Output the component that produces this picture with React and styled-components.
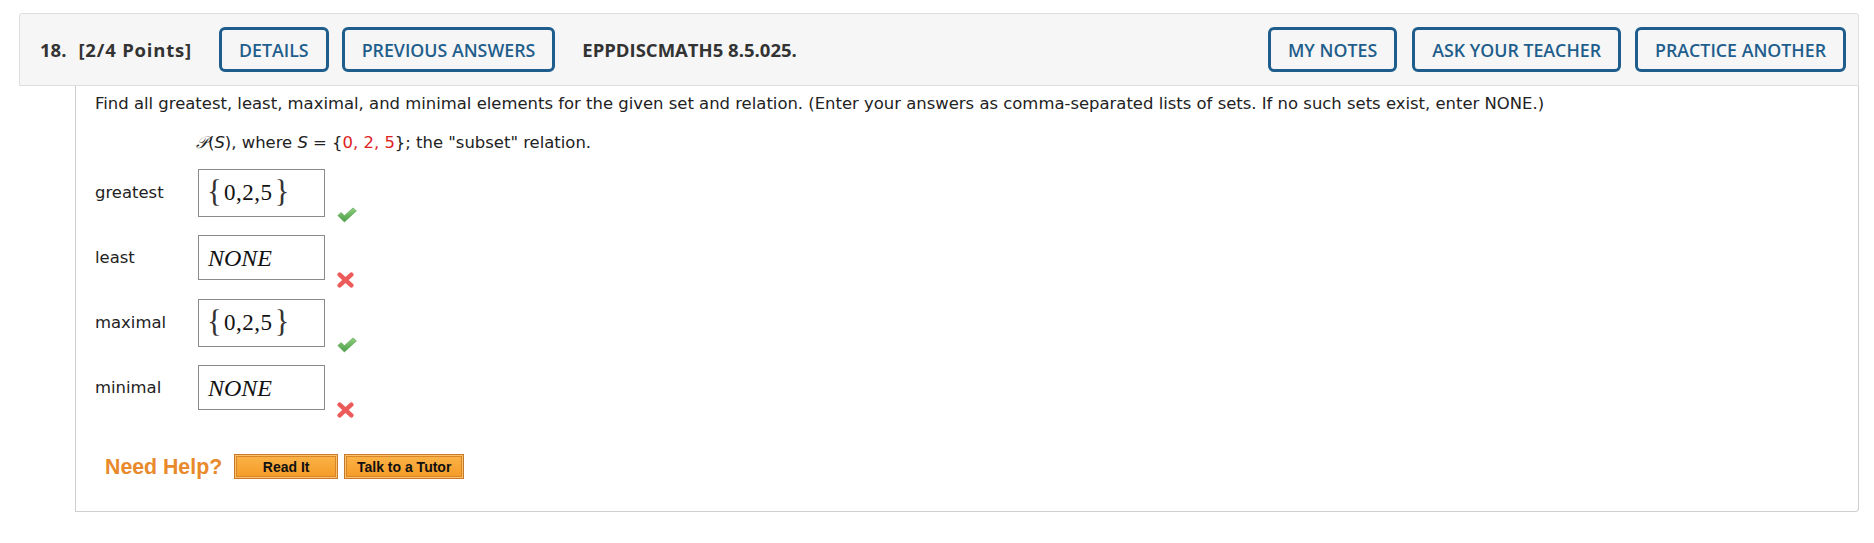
import React from "react";
import styled, { createGlobalStyle } from "styled-components";

const Global = createGlobalStyle`
  html, body { margin: 0; padding: 0; background: #fff; }
  body { font-family: "DejaVu Sans", Verdana, sans-serif; color: #222; }
`;

const Page = styled.div`
  padding: 13px 15px 0 19px;
`;

const Header = styled.div`
  display: flex;
  align-items: center;
  height: 71px;
  padding: 0 12px 0 20px;
  background: #f6f6f6;
  border: 1px solid #dedede;
  border-radius: 3px 3px 0 0;
  font-family: "Open Sans", sans-serif;
`;

const HeaderText = styled.span`
  font-weight: 700;
  font-size: 18.5px;
  color: #333;
  white-space: nowrap;
`;

const Number = styled(HeaderText)`
  margin-right: 12px;
`;

const Points = styled(HeaderText)`
  margin-right: 27px;
  letter-spacing: 0.8px;
`;

const Code = styled(HeaderText)`
  margin-left: 27px;
  flex: 1;
`;

const OutlineButton = styled.button`
  font-family: "Open Sans", sans-serif;
  font-weight: 600;
  font-size: 17.8px;
  color: #1f5e8c;
  background: transparent;
  border: 3px solid #1f5e8c;
  border-radius: 6px;
  height: 45px;
  padding: 0 17px;
  margin-left: ${(p) => p.$gap || 0}px;
  cursor: pointer;
  white-space: nowrap;
`;

const Body = styled.div`
  margin-left: 56px;
  border: 1px solid #cfcfcf;
  border-top: none;
  border-radius: 0 0 4px 0;
  padding: 8px 19px 32px 19px;
  font-size: 16.45px;
  line-height: 20px;
  color: #222;
`;

const Prompt = styled.div`
  white-space: nowrap;
`;

const Statement = styled.div`
  margin-top: 19px;
  padding-left: 96px;
`;

const Script = styled.span`
  display: inline-block;
  padding-left: 5px;
  font-family: "DejaVu Serif", "Liberation Serif", serif;
  font-style: italic;
`;

const Ital = styled.span`
  font-style: italic;
`;

const Red = styled.span`
  color: #e0221f;
`;

const Answers = styled.div`
  margin-top: 17px;
  display: flex;
  flex-direction: column;
  gap: 20px;
`;

const Row = styled.div`
  display: flex;
  align-items: center;
  height: 45px;
`;

const Label = styled.div`
  width: 103px;
`;

const AnswerBox = styled.div`
  box-sizing: border-box;
  width: 127px;
  height: ${(p) => (p.$tall ? 48 : 45)}px;
  border: 1px solid #8a8a8a;
  background: #fff;
  display: flex;
  align-items: center;
  padding-left: ${(p) => (p.$tall ? 6 : 9)}px;
  font-family: "Liberation Serif", "Times New Roman", serif;
  font-size: 23px;
  color: #111;
`;

const Brace = styled.span`
  font-size: 31px;
  font-weight: 300;
  line-height: 1;
  margin: 0 2px;
  color: #333;
  transform: translateY(-1px);
`;

const Digits = styled.span`
  letter-spacing: 0.5px;
`;

const NoneText = styled.span`
  font-style: italic;
  font-size: 24px;
`;

const Mark = styled.span`
  align-self: flex-end;
  margin-left: 12px;
  margin-bottom: -8px;
  display: inline-flex;
  line-height: 0;
`;

const HelpRow = styled.div`
  margin-top: 44px;
  padding-left: 10px;
  display: flex;
  align-items: center;
  gap: 6px;
`;

const NeedHelp = styled.span`
  font-family: "Liberation Sans", Arial, sans-serif;
  font-weight: 700;
  font-size: 21.3px;
  color: #e8892b;
  margin-right: 6px;
`;

const HelpButton = styled.button`
  box-sizing: border-box;
  width: ${(p) => p.$w}px;
  height: 25px;
  padding: 0;
  border: 1px solid #c9772a;
  background: linear-gradient(#fbb448, #f49a27);
  box-shadow: inset 0 0 0 1px #fcc46a, inset 0 0 0 2px #d98628;
  font-family: "Liberation Sans", Arial, sans-serif;
  font-weight: 700;
  font-size: 14px;
  color: #111;
  cursor: pointer;
`;

const Check = () => (
  <svg width="20" height="16" viewBox="0 0 19 15">
    <defs>
      <linearGradient id="cg" x1="0" y1="0" x2="0" y2="1">
        <stop offset="0" stopColor="#8fcf7c" />
        <stop offset="1" stopColor="#4a9d47" />
      </linearGradient>
    </defs>
    <path
      d="M0.8 8 L4 5.2 L7 8.2 L15.2 0.8 L18.4 3.6 L7 14.2 Z"
      fill="url(#cg)"
      stroke="#58a350"
      strokeWidth="0.6"
      strokeLinejoin="round"
    />
  </svg>
);

const Cross = () => (
  <svg width="17" height="16" viewBox="0 0 16 15">
    <g stroke="#ec5a5a" strokeWidth="4.2" strokeLinecap="round">
      <line x1="2.5" y1="2.5" x2="13.5" y2="12.5" />
      <line x1="13.5" y1="2.5" x2="2.5" y2="12.5" />
    </g>
  </svg>
);

const SetValue = () => (
  <>
    <Brace>{"{"}</Brace>
    <Digits>0,2,5</Digits>
    <Brace>{"}"}</Brace>
  </>
);

const answers = [
  { label: "greatest", set: true, ok: true },
  { label: "least", set: false, ok: false },
  { label: "maximal", set: true, ok: true },
  { label: "minimal", set: false, ok: false },
];

export default function App() {
  return (
    <>
      <Global />
      <Page>
        <Header>
          <Number>18.</Number>
          <Points>[2/4 Points]</Points>
          <OutlineButton>DETAILS</OutlineButton>
          <OutlineButton $gap={13}>PREVIOUS ANSWERS</OutlineButton>
          <Code>EPPDISCMATH5 8.5.025.</Code>
          <OutlineButton>MY NOTES</OutlineButton>
          <OutlineButton $gap={15}>ASK YOUR TEACHER</OutlineButton>
          <OutlineButton $gap={14}>PRACTICE ANOTHER</OutlineButton>
        </Header>
        <Body>
          <Prompt>
            Find all greatest, least, maximal, and minimal elements for the given set and
            relation. (Enter your answers as comma-separated lists of sets. If no such sets
            exist, enter NONE.)
          </Prompt>
          <Statement>
            <Script>𝒫</Script>(<Ital>S</Ital>), where <Ital>S</Ital> = {"{"}
            <Red>0, 2, 5</Red>
            {"}"}; the "subset" relation.
          </Statement>
          <Answers>
            {answers.map((a) => (
              <Row key={a.label}>
                <Label>{a.label}</Label>
                <AnswerBox $tall={a.set}>
                  {a.set ? <SetValue /> : <NoneText>NONE</NoneText>}
                </AnswerBox>
                <Mark>{a.ok ? <Check /> : <Cross />}</Mark>
              </Row>
            ))}
          </Answers>
          <HelpRow>
            <NeedHelp>Need Help?</NeedHelp>
            <HelpButton $w={104}>Read It</HelpButton>
            <HelpButton $w={120}>Talk to a Tutor</HelpButton>
          </HelpRow>
        </Body>
      </Page>
    </>
  );
}
